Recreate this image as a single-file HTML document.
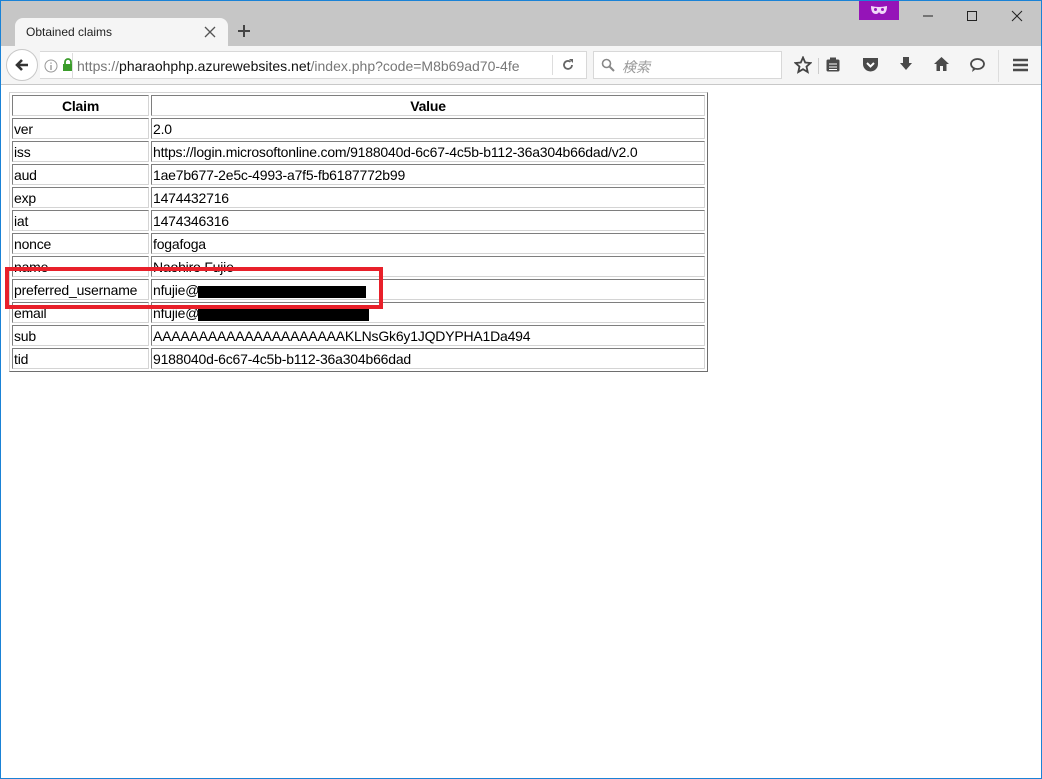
<!DOCTYPE html>
<html><head><meta charset="utf-8"><style>
*{margin:0;padding:0;box-sizing:border-box}
body{width:1042px;height:779px;position:relative;overflow:hidden;background:#fff;font-family:"Liberation Sans",sans-serif}
.frame{position:absolute;left:0;top:0;width:1042px;height:779px;border:1px solid #1a82d6;pointer-events:none;z-index:10}
.tabbar{position:absolute;left:0;top:0;width:1042px;height:46px;background:#c6c6c6}
.tab{position:absolute;left:15px;top:18px;width:213px;height:28px;background:#f5f5f5;border-radius:8px 8px 0 0}
.tab span{position:absolute;left:11px;top:7px;font-size:12px;color:#222}
.toolbar{position:absolute;left:0;top:46px;width:1042px;height:39px;background:#f5f5f5;border-bottom:1px solid #c8c8c8}
.url{position:absolute;left:40px;top:5px;width:547px;height:28px;background:#fff;border:1px solid #d8d8d8;border-left:none}
.back{position:absolute;left:6px;top:3px;width:32px;height:32px;border-radius:50%;background:#fff;border:1px solid #c8c8c8}
.search{position:absolute;left:593px;top:5px;width:189px;height:28px;background:#fff;border:1px solid #d8d8d8}
.ic{position:absolute;color:#4a4a4a}
table{position:absolute;left:9px;top:92px;border:1px solid;border-color:#d4d4d4 #6e6e6e #6e6e6e #d4d4d4;border-spacing:2px;font-size:14px;font-family:"Liberation Sans",sans-serif}
td,th{border:1px solid;border-color:#7e7e7e #d4d4d4 #d4d4d4 #7e7e7e;height:21px;padding:0 1px;white-space:nowrap;text-align:left;font-weight:normal;color:#000;letter-spacing:-0.2px}
th{text-align:center;font-weight:bold}
</style></head><body>
<div class="tabbar">
 <div class="tab"><span>Obtained claims</span>
  <svg style="position:absolute;left:189px;top:8px" width="12" height="12"><path d="M1 1L11 11M11 1L1 11" stroke="#555" stroke-width="1.3"/></svg></div>
 <svg style="position:absolute;left:237px;top:24px" width="14" height="14"><path d="M7 1V13M1 7H13" stroke="#444" stroke-width="2"/></svg>
 <div style="position:absolute;left:859px;top:1px;width:40px;height:19px;background:#9514b8"></div>
 <svg style="position:absolute;left:870px;top:5px" width="18" height="10"><path d="M1 1Q9 3 17 1Q17 9 12 9Q10 9 9 7Q8 9 6 9Q1 9 1 1Z" fill="#f0d8f8"/><circle cx="5.5" cy="4.5" r="1.5" fill="#9514b8"/><circle cx="12.5" cy="4.5" r="1.5" fill="#9514b8"/></svg>
 <svg style="position:absolute;left:922px;top:10px" width="12" height="12"><path d="M1 6H11" stroke="#222"/></svg>
 <svg style="position:absolute;left:966px;top:10px" width="12" height="12"><rect x="1.5" y="1.5" width="9" height="9" fill="none" stroke="#222"/></svg>
 <svg style="position:absolute;left:1011px;top:10px" width="12" height="12"><path d="M1 1L11 11M11 1L1 11" stroke="#222"/></svg>
</div>
<div class="toolbar">
 <div class="url">
  <svg style="position:absolute;left:4px;top:7px" width="14" height="14"><circle cx="7" cy="7" r="6" fill="none" stroke="#999"/><path d="M7 6V11M7 3.5V4.8" stroke="#999" stroke-width="1.4"/></svg>
  <svg style="position:absolute;left:22px;top:6px" width="12" height="14"><path d="M3 6V4a3 3 0 0 1 6 0V6" fill="none" stroke="#3b9c2b" stroke-width="1.8"/><rect x="1" y="6" width="10" height="7" fill="#3b9c2b"/></svg>
  <div style="position:absolute;left:32px;top:1px;width:1px;height:26px;background:#ddd"></div>
  <span style="position:absolute;left:37px;top:6px;font-size:14px;color:#777;white-space:nowrap">https://<span style="color:#111">pharaohphp.azurewebsites.net</span>/index.php?code=M8b69ad70-4fe</span>
  <div style="position:absolute;left:512px;top:3px;width:1px;height:20px;background:#ddd"></div>
  <svg style="position:absolute;left:521px;top:6px" width="14" height="14"><path d="M11 7A4 4 0 1 1 9.5 3.8" fill="none" stroke="#666" stroke-width="1.8"/><path d="M8 1H12V5Z" fill="#666"/></svg>
 </div>
 <div class="back"><svg style="position:absolute;left:7px;top:7px" width="16" height="16"><path d="M14 8H4M8 3L3 8L8 13" fill="none" stroke="#333" stroke-width="2.6"/></svg></div>
 <div class="search">
  <svg style="position:absolute;left:7px;top:6px" width="14" height="14"><circle cx="5.5" cy="5.5" r="4" fill="none" stroke="#888" stroke-width="1.6"/><path d="M8.5 8.5L13 13" stroke="#888" stroke-width="2"/></svg>
  <span style="position:absolute;left:28px;top:5px;font-size:14px;color:#999;font-style:italic;font-family:'Liberation Sans','Noto Sans CJK JP',sans-serif">検索</span>
 </div>
 <svg class="ic" style="left:794px;top:10px" width="18" height="18"><path d="M9 1.5L11.2 6.5L16.5 7L12.5 10.6L13.7 16L9 13.2L4.3 16L5.5 10.6L1.5 7L6.8 6.5Z" fill="none" stroke="#444" stroke-width="1.8"/></svg>
 <div style="position:absolute;left:818px;top:12px;width:1px;height:16px;background:#ccc"></div>
 <svg class="ic" style="left:825px;top:11px" width="16" height="16"><rect x="1.5" y="2.5" width="13" height="12" rx="1.5" fill="#4a4a4a"/><rect x="5" y="0.5" width="6" height="3" fill="#4a4a4a"/><path d="M4 7H12M4 10H12M4 12.5H12" stroke="#fff"/></svg>
 <svg class="ic" style="left:862px;top:11px" width="17" height="16"><path d="M1 1H16V7A7.5 7.5 0 0 1 1 7Z" fill="#4a4a4a"/><path d="M5 6L8.5 9.5L12 6" fill="none" stroke="#fff" stroke-width="2"/></svg>
 <svg class="ic" style="left:899px;top:10px" width="14" height="16"><path d="M4 1H10V7H13L7 14L1 7H4Z" fill="#4a4a4a"/></svg>
 <svg class="ic" style="left:933px;top:10px" width="17" height="16"><path d="M8.5 1L16 8H13.5V15H10V10H7V15H3.5V8H1Z" fill="#4a4a4a"/></svg>
 <svg class="ic" style="left:969px;top:11px" width="17" height="16"><ellipse cx="8.5" cy="7" rx="6.5" ry="5" fill="none" stroke="#4a4a4a" stroke-width="1.8"/><path d="M4 11L3 15L7 12" fill="#4a4a4a"/></svg>
 <div style="position:absolute;left:998px;top:4px;width:1px;height:32px;background:#ddd"></div>
 <svg class="ic" style="left:1012px;top:12px" width="17" height="14"><path d="M1 2H16M1 7H16M1 12H16" stroke="#4a4a4a" stroke-width="2.6"/></svg>
</div>
<table>
<tr><th style="width:137px">Claim</th><th style="width:554px">Value</th></tr>
<tr><td>ver</td><td>2.0</td></tr>
<tr><td>iss</td><td>https://login.microsoftonline.com/9188040d-6c67-4c5b-b112-36a304b66dad/v2.0</td></tr>
<tr><td>aud</td><td>1ae7b677-2e5c-4993-a7f5-fb6187772b99</td></tr>
<tr><td>exp</td><td>1474432716</td></tr>
<tr><td>iat</td><td>1474346316</td></tr>
<tr><td>nonce</td><td>fogafoga</td></tr>
<tr><td>name</td><td>Naohiro Fujie</td></tr>
<tr><td>preferred_username</td><td>nfujie@</td></tr>
<tr><td>email</td><td>nfujie@</td></tr>
<tr><td>sub</td><td>AAAAAAAAAAAAAAAAAAAAAKLNsGk6y1JQDYPHA1Da494</td></tr>
<tr><td>tid</td><td>9188040d-6c67-4c5b-b112-36a304b66dad</td></tr>
</table>
<div style="position:absolute;left:198px;top:286px;width:168px;height:12px;background:#000"></div>
<div style="position:absolute;left:198px;top:309px;width:171px;height:12px;background:#000"></div>
<div style="position:absolute;left:5px;top:267px;width:378px;height:42px;border:4px solid #e8202a"></div>
<div class="frame"></div>
</body></html>
